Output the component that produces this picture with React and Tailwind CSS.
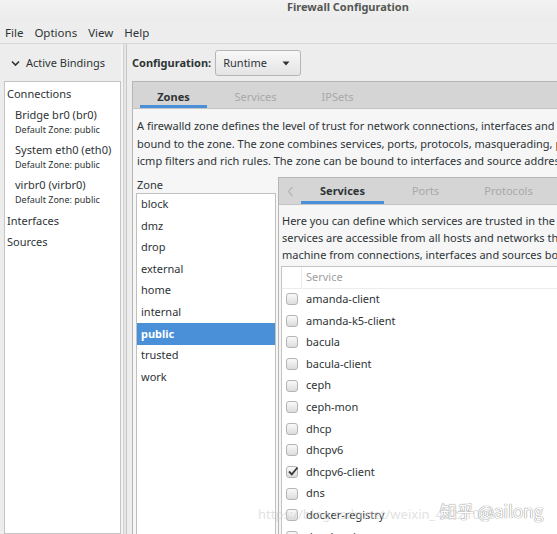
import React from 'react'

const zones = ['block', 'dmz', 'drop', 'external', 'home', 'internal', 'public', 'trusted', 'work']

const services = [
  { name: 'amanda-client' },
  { name: 'amanda-k5-client' },
  { name: 'bacula' },
  { name: 'bacula-client' },
  { name: 'ceph' },
  { name: 'ceph-mon' },
  { name: 'dhcp' },
  { name: 'dhcpv6' },
  { name: 'dhcpv6-client', checked: true },
  { name: 'dns' },
  { name: 'docker-registry' },
  { name: 'dropbox-lansync' },
]

const bindings = [
  { name: 'Bridge br0 (br0)' },
  { name: 'System eth0 (eth0)' },
  { name: 'virbr0 (virbr0)' },
]

const Checkbox = ({ checked }) => (
  <div className="relative w-[12px] h-[12px] shrink-0 rounded-[3px] border border-[#b4b4b4] bg-gradient-to-b from-[#fafafa] to-[#dcdcdc]">
    {checked && (
      <svg className="absolute left-[0px] top-[-2px]" width="12" height="12" viewBox="0 0 12 12">
        <path d="M2 6.5 L4.8 9.3 L10.5 2.5" fill="none" stroke="#3a3a3a" strokeWidth="1.8" />
      </svg>
    )}
  </div>
)

const App = () => {
  return (
    <div
      className="relative w-[557px] h-[534px] overflow-hidden bg-[#ededed] text-[#2e3436] flex flex-col"
      style={{ fontFamily: '"Noto Sans", "Open Sans", sans-serif' }}
    >
      {/* title bar */}
      <div className="h-[22px] shrink-0 flex items-start pl-[287px] bg-gradient-to-b from-[#f2f2f2] to-[#ebebeb]">
        <span className="text-[11px] leading-[13px] font-bold text-[#555753]">Firewall Configuration</span>
      </div>

      {/* menu */}
      <div className="h-[22px] shrink-0 flex items-center pl-[5px] gap-[11px] text-[11.5px] border-b border-[#d8d8d8]">
        <span>File</span>
        <span>Options</span>
        <span>View</span>
        <span>Help</span>
      </div>

      <div className="flex flex-1 min-h-0">
        {/* left side */}
        <div className="w-[121px] shrink-0 flex flex-col">
          <div className="h-[37px] shrink-0 flex items-center pl-[11px] pt-[1px] gap-[6px] text-[11px]">
            <svg width="9" height="7" viewBox="0 0 9 7">
              <path d="M1 1.5 L4.5 5 L8 1.5" fill="none" stroke="#2e3436" strokeWidth="1.6" />
            </svg>
            <span>Active Bindings</span>
          </div>
          <div className="flex-1 ml-[4px] bg-white border border-[#c4c4c4] pt-[2px] text-[11px]">
            <div className="h-[20px] flex items-center pl-[2px]">Connections</div>
            {bindings.map((b) => (
              <div key={b.name} className="pl-[10px] h-[35px] flex flex-col justify-center">
                <span className="leading-[16px]">{b.name}</span>
                <span className="text-[9px] leading-[13px]">Default Zone: public</span>
              </div>
            ))}
            <div className="mt-[2px] h-[21px] flex items-center pl-[2px]">Interfaces</div>
            <div className="h-[21px] flex items-center pl-[2px]">Sources</div>
          </div>
        </div>

        {/* pane handle */}
        <div className="w-[6px] shrink-0 flex">
          <div className="w-[2px] bg-[#f4f4f4]" />
          <div className="w-[1px] bg-[#d0d0d0]" />
          <div className="w-[3px] bg-[#e6e6e6] border-r border-[#c8c8c8]" />
        </div>

        {/* right side */}
        <div className="flex-1 min-w-0 flex flex-col">
          <div className="h-[37px] shrink-0 flex items-center pl-[5px] pt-[1px] gap-[4px]">
            <span className="text-[11px] font-bold">Configuration:</span>
            <div className="w-[86px] h-[26px] rounded-[3px] border border-[#b6b6b6] bg-gradient-to-b from-[#f8f8f8] to-[#e4e4e4] flex items-center justify-between pl-[7px] pr-[10px] text-[11px]">
              <span>Runtime</span>
              <svg width="8" height="5" viewBox="0 0 8 5">
                <path d="M0.5 0.5 L7.5 0.5 L4 4.5 Z" fill="#2e3436" />
              </svg>
            </div>
          </div>

          {/* outer notebook */}
          <div className="flex-1 min-h-0 ml-[5px] border-l border-t border-[#b6b6b6] flex flex-col bg-[#f6f6f6]">
            <div className="h-[27px] shrink-0 bg-[#d5d5d5] border-b border-[#c4c4c4] flex pl-[7px] gap-[15px] text-[11px]">
              <div className="w-[67px] flex items-center justify-center pt-[4px] relative font-bold text-[#2e3436]">
                Zones
                <div className="absolute left-0 right-0 bottom-0 h-[3px] bg-[#4a90d9]" />
              </div>
              <div className="w-[67px] flex items-center justify-center pt-[4px] text-[#a8a8a8]">Services</div>
              <div className="w-[67px] flex items-center justify-center pt-[4px] text-[#a8a8a8]">IPSets</div>
            </div>

            <div className="pl-[4px] pt-[8px] text-[11px] leading-[17.5px] whitespace-nowrap">
              <div>A firewalld zone defines the level of trust for network connections, interfaces and source addresses</div>
              <div>bound to the zone. The zone combines services, ports, protocols, masquerading, port/packet forwarding,</div>
              <div>icmp filters and rich rules. The zone can be bound to interfaces and source addresses.</div>
            </div>

            <div className="flex-1 min-h-0 flex pt-[7px]">
              {/* zone list */}
              <div className="w-[145px] shrink-0 flex flex-col">
                <div className="h-[16px] shrink-0 pl-[4px] pt-[1px] text-[11px] flex items-center">Zone</div>
                <div className="flex-1 ml-[3px] mr-[2px] bg-white border-t border-l border-r border-[#c0c0c0] text-[11px]">
                  {zones.map((z) => (
                    <div
                      key={z}
                      className={`h-[21.6px] flex items-center pl-[4px] ${
                        z === 'public' ? 'bg-[#4a90d9] text-white font-bold' : ''
                      }`}
                    >
                      {z}
                    </div>
                  ))}
                </div>
              </div>

              {/* inner notebook */}
              <div className="flex-1 min-w-0 border-l border-t border-[#b6b6b6] flex flex-col">
                <div className="h-[27px] shrink-0 bg-[#d5d5d5] border-b border-[#c4c4c4] flex text-[11px]">
                  <div className="w-[22px] flex items-center justify-center pt-[2px]">
                    <svg width="7" height="11" viewBox="0 0 7 11">
                      <path d="M5.5 1 L1.5 5.5 L5.5 10" fill="none" stroke="#b8b8b8" strokeWidth="1.4" />
                    </svg>
                  </div>
                  <div className="w-[83px] flex items-center justify-center pt-[2px] relative font-bold">
                    Services
                    <div className="absolute left-0 right-0 bottom-0 h-[3px] bg-[#4a90d9]" />
                  </div>
                  <div className="w-[83px] flex items-center justify-center pt-[2px] text-[#a8a8a8]">Ports</div>
                  <div className="w-[83px] flex items-center justify-center pt-[2px] text-[#a8a8a8]">Protocols</div>
                </div>

                <div className="pl-[3px] pt-[7px] text-[11px] leading-[17px] whitespace-nowrap">
                  <div>Here you can define which services are trusted in the zone. Trusted</div>
                  <div>services are accessible from all hosts and networks that can reach the</div>
                  <div>machine from connections, interfaces and sources bound to this zone.</div>
                </div>

                <div className="flex-1 min-h-0 ml-[2px] mt-[3px] bg-white border-l border-t border-[#c4c4c4] text-[11px]">
                  <div className="h-[22px] flex items-center border-b border-[#ececec]">
                    <div className="w-[20px] h-full border-r border-[#ececec]" />
                    <span className="pl-[4px] text-[#a0a0a0]">Service</span>
                  </div>
                  {services.map((s) => (
                    <div key={s.name} className="h-[21.6px] flex items-center pl-[4px] gap-[8px]">
                      <Checkbox checked={s.checked} />
                      <span>{s.name}</span>
                    </div>
                  ))}
                </div>
              </div>
            </div>
          </div>
        </div>
      </div>

      {/* watermark */}
      <div className="absolute left-[258px] top-[505px] text-[13px] text-[#d0d0d0] opacity-60 whitespace-nowrap pointer-events-none">
        https://blog.csdn.net/weixin_42221018
      </div>
      <div
        className="absolute left-[440px] top-[498px] text-[17px] text-white whitespace-nowrap pointer-events-none"
        style={{ fontFamily: '"Noto Sans CJK SC", "Noto Sans", sans-serif', textShadow: '0 0 1px #888, 0 0 1px #888' }}
      >
        知乎 @ailong
      </div>
    </div>
  )
}

export default App
